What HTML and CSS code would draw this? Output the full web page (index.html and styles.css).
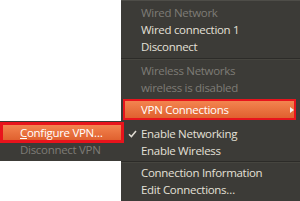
FILE: index.html
```html
<!DOCTYPE html>
<html>
<head>
<meta charset="utf-8">
<link rel="stylesheet" href="styles.css">
</head>
<body>
<div class="desktop">
  <div class="menu main">
    <div class="item disabled">Wired Network</div>
    <div class="item">Wired connection 1</div>
    <div class="item">Disconnect</div>
    <div class="sep"></div>
    <div class="item disabled">Wireless Networks</div>
    <div class="item disabled">wireless is disabled</div>
    <div class="mark vpn">
      <div class="item active">VPN Connections
        <svg class="arrow" width="4" height="6" viewBox="0 0 4 6"><path d="M0 0 L4 3 L0 6 Z" fill="#f4f1ec"/></svg>
      </div>
    </div>
    <div class="item check-row">
      <svg class="check" width="9" height="8" viewBox="0 0 9 8"><path d="M1 4.2 L3.4 6.6 L8 1" fill="none" stroke="#dfdbd2" stroke-width="1.5"/></svg>
      Enable Networking</div>
    <div class="item">Enable Wireless</div>
    <div class="sep sep2"></div>
    <div class="item">Connection Information</div>
    <div class="item">Edit Connections…</div>
  </div>
  <div class="menu sub">
    <div class="mark cfg">
      <div class="item active"><span class="u">C</span>onfigure VPN…</div>
    </div>
    <div class="item disabled">Disconnect VPN</div>
  </div>
</div>
</body>
</html>
```
FILE: styles.css
```css
* { box-sizing: border-box; }
html, body { margin: 0; padding: 0; background: #ffffff; }
body { width: 300px; height: 201px; overflow: hidden; font-family: "Open Sans", "DejaVu Sans", sans-serif; font-size: 11.5px; letter-spacing: -0.3px; }
.desktop { position: relative; width: 300px; height: 201px; display: flex; justify-content: flex-end; }
.menu { background: #3c3b37; color: #e4e0d8; display: flex; flex-direction: column; }
.main { width: 179px; height: 201px; padding-top: 3px; border-top: 1px solid #4e4d48; }
.item { height: 17px; line-height: 17px; padding-left: 20px; white-space: nowrap; position: relative; }
.disabled { color: #7e7c76; }
.sep { height: 7px; padding-top: 3px; }
.sep::before { content: ""; display: block; height: 1px; background: #2c2b28; border-bottom: 1px solid #46453f; }
.sep2 { height: 5px; padding-top: 2px; }
.mark { border: 2px solid #e8141c; }
.vpn { margin: 3px 4px 5px 2px; }
.vpn .item { padding-left: 16px; }
.active { background: linear-gradient(#f3844f, #e0612f); color: #ffffff; }
.arrow { position: absolute; right: 0; top: 6px; }
.check { position: absolute; left: 7px; top: 5px; }
.sub { position: absolute; left: 0; top: 121px; width: 121px; height: 40px; padding-top: 1px; }
.cfg { border-width: 3px; width: 124px; }
.cfg .item { height: 15px; line-height: 15px; padding-left: 17px; }
.sub > .item { padding-left: 20px; height: 14px; line-height: 14px; }
.u { text-decoration: underline; text-underline-offset: 1px; }
```
